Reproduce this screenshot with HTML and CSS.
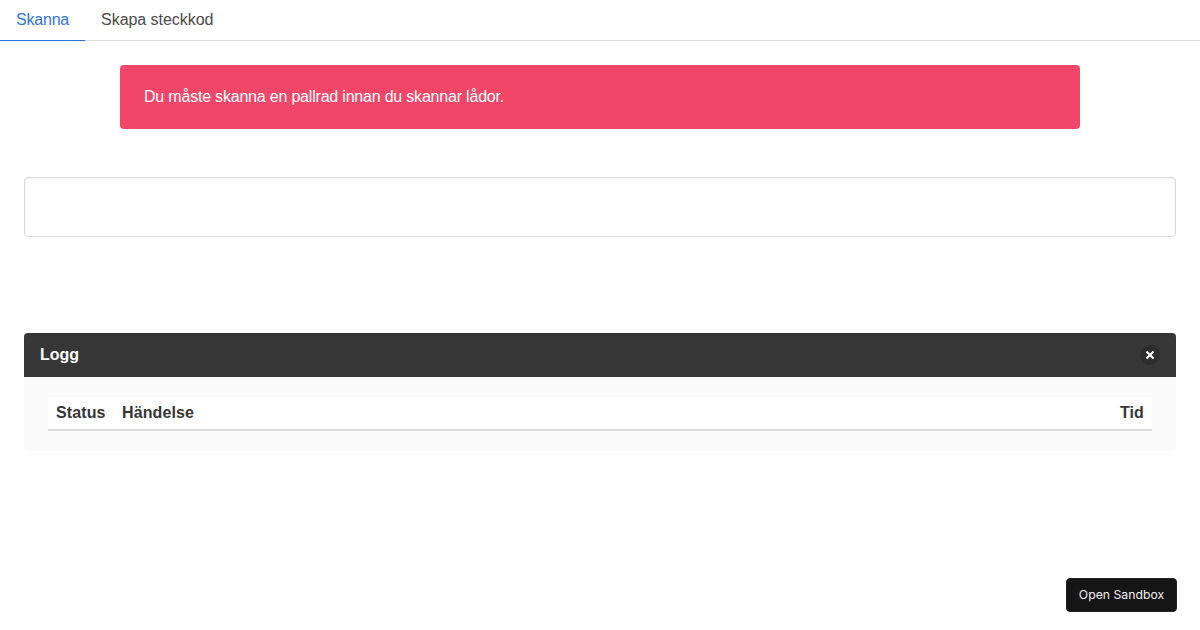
FILE: index.html
```html
<!DOCTYPE html>
<html lang="sv">
<head>
    <meta charset="UTF-8">
    <title>Skanna</title>
    <link rel="stylesheet" href="styles.css">
</head>
<body>
    <nav class="tabs">
        <a class="tab active" href="#">Skanna</a>
        <a class="tab" href="#">Skapa steckkod</a>
    </nav>
    <main class="content">
        <div class="notification">Du måste skanna en pallrad innan du skannar lådor.</div>
        <input class="scan-input" type="text">
        <section class="message">
            <header class="message-header">
                <span>Logg</span>
                <button class="delete" type="button" aria-label="Stäng"></button>
            </header>
            <div class="message-body">
                <table class="log-table">
                    <thead>
                        <tr>
                            <th class="col-status">Status</th>
                            <th>Händelse</th>
                            <th class="col-time">Tid</th>
                        </tr>
                    </thead>
                </table>
            </div>
        </section>
    </main>
    <button class="sandbox-btn" type="button">Open Sandbox</button>
</body>
</html>
```

FILE: styles.css
```css
* {
    box-sizing: border-box;
}
body {
    margin: 0;
    font-family: "Liberation Sans", Arial, sans-serif;
    font-size: 16px;
    line-height: 24px;
    color: #4a4a4a;
    background-color: #fff;
}
.tabs {
    display: flex;
    height: 41px;
    border-bottom: 1px solid #dbdbdb;
}
.tab {
    height: 41px;
    padding: 8px 16px;
    color: #4a4a4a;
    letter-spacing: -0.05px;
    text-decoration: none;
    border-bottom: 1px solid #dbdbdb;
}
.tab.active {
    color: #3273dc;
    letter-spacing: -0.2px;
    border-bottom-color: #3273dc;
}
.content {
    padding: 24px;
}
.notification {
    width: 960px;
    height: 64px;
    margin: 0 auto 48px;
    padding: 20px 24px;
    color: #fff;
    letter-spacing: -0.2px;
    background-color: #f14668;
    border-radius: 4px;
}
.scan-input {
    display: block;
    width: 100%;
    height: 60px;
    margin-bottom: 96px;
    border: 1px solid #dbdbdb;
    border-radius: 4px;
    background-color: #fff;
    box-shadow: inset 0 1px 2px rgba(10, 10, 10, 0.05);
}
.message {
    border-radius: 4px;
    background-color: #fafafa;
}
.message-header {
    display: flex;
    align-items: center;
    justify-content: space-between;
    height: 44px;
    padding: 0 16px;
    color: #fff;
    font-weight: bold;
    background-color: #363636;
    border-radius: 4px 4px 0 0;
}
.delete {
    position: relative;
    width: 20px;
    height: 20px;
    padding: 0;
    border: none;
    border-radius: 50%;
    background-color: rgba(10, 10, 10, 0.2);
}
.delete::before,
.delete::after {
    content: "";
    position: absolute;
    top: 50%;
    left: 50%;
    background-color: #fff;
    transform: translate(-50%, -50%) rotate(45deg);
}
.delete::before {
    width: 10px;
    height: 2px;
}
.delete::after {
    width: 2px;
    height: 10px;
}
.message-body {
    height: 74px;
    padding: 20px 24px;
}
.log-table {
    width: 100%;
    border-collapse: separate;
    border-spacing: 0;
    background-color: #fff;
}
.log-table th {
    height: 34px;
    padding: 4px 8px;
    color: #363636;
    letter-spacing: 0.12px;
    text-align: left;
    border-bottom: 2px solid #dbdbdb;
}
.log-table .col-status {
    width: 66px;
}
.log-table .col-time {
    text-align: right;
}
.sandbox-btn {
    position: fixed;
    right: 23px;
    bottom: 18px;
    width: 111px;
    height: 34px;
    padding: 0 0 2px;
    font-family: Inter, sans-serif;
    font-size: 12.25px;
    color: #f0f0f0;
    background-color: #151515;
    border: 1px solid #222;
    border-radius: 4px;
}
```
